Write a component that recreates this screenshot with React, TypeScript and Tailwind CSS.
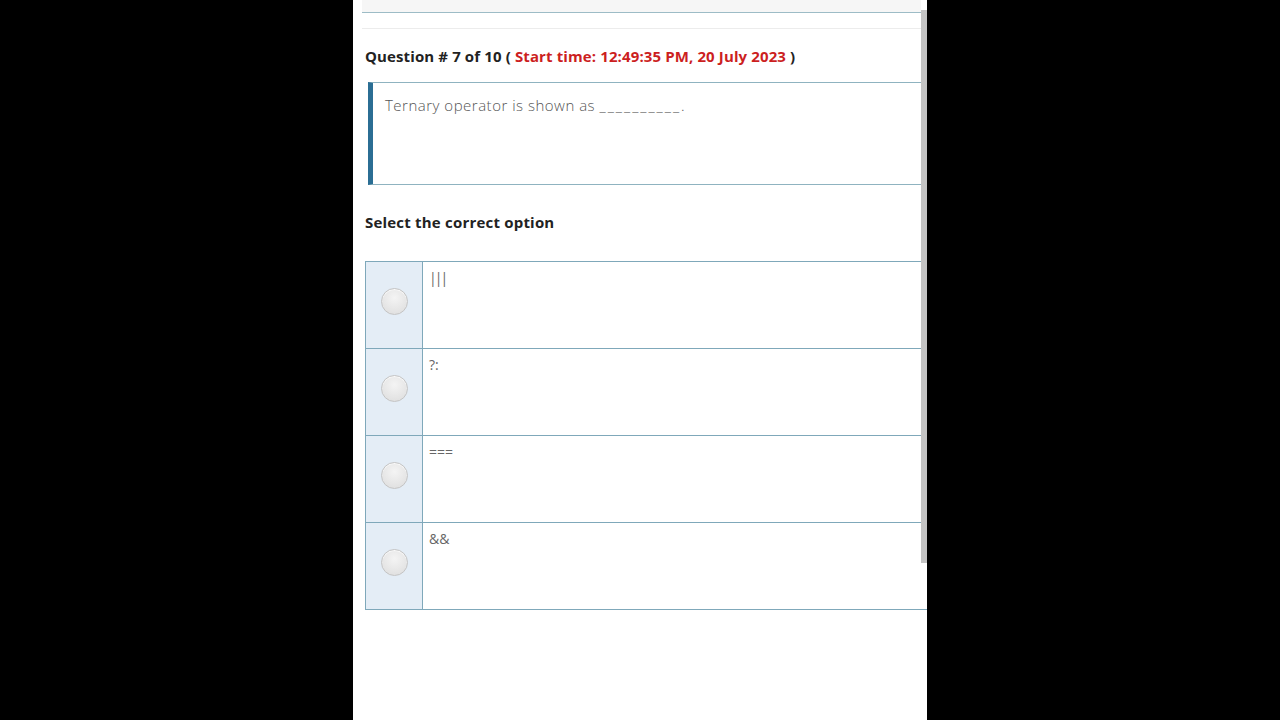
const options = ['|||', '?:', '===', '&&']

function Radio() {
  return (
    <span className="-mt-[8px] block h-[27px] w-[27px] rounded-full border border-[#c4c4c4] bg-[radial-gradient(circle_at_50%_35%,#f4f4f4,#dcdcdc)] shadow-[inset_0_1px_1px_rgba(255,255,255,0.8)]" />
  )
}

export default function App() {
  return (
    <div className="flex h-[720px] justify-center bg-black" style={{ fontFamily: '"Open Sans", "Noto Sans", sans-serif' }}>
      <div className="relative h-full w-[574px] overflow-hidden bg-white">
        <div className="w-[600px] pl-[9px]">
          <div className="h-[13px] w-[559px] border-b border-[#9dbcc6] bg-[#f6f6f6]" />
          <div className="mt-[15px] h-px w-[559px] bg-[#ececec]" />

          <div className="pl-[3px]">
            <h2 className="mt-[16px] text-[15px] font-bold tracking-[0.12px] text-[#222]">
              Question # 7 of 10 ({' '}
              <span className="text-[#cc1f1f]">Start time: 12:49:35 PM, 20 July 2023</span> )
            </h2>

            <div className="mt-[14px] ml-[3px] flex h-[103px] border-y border-[#8fb3c0] border-l-[5px] border-l-[#2b6e94]">
              <p className="pl-[12px] pt-[11px] text-[15px] font-light tracking-[0.5px] text-[#555]">
                Ternary operator is shown as <span className="tracking-[2px]">__________</span>.
              </p>
            </div>

            <h3 className="mt-[26px] text-[15px] font-bold tracking-[0.2px] text-[#222]">Select the correct option</h3>

            <div className="mt-[28px] border-t border-[#7fa8ba]">
              {options.map((opt) => (
                <div key={opt} className="flex h-[87px] border-b border-[#7fa8ba]">
                  <div className="flex w-[58px] shrink-0 items-center justify-center border-x border-[#7fa8ba] bg-[#e4edf6]">
                    <Radio />
                  </div>
                  <div className={`flex-1 px-[6px] pt-[5px] text-[14px] text-[#666] ${opt === '|||' ? 'tracking-[-2px]' : ''}`}>{opt}</div>
                </div>
              ))}
            </div>
          </div>
        </div>

        <div className="absolute right-0 top-[10px] h-[553px] w-[6px] bg-[#c4c4c4]" />
      </div>
    </div>
  )
}
